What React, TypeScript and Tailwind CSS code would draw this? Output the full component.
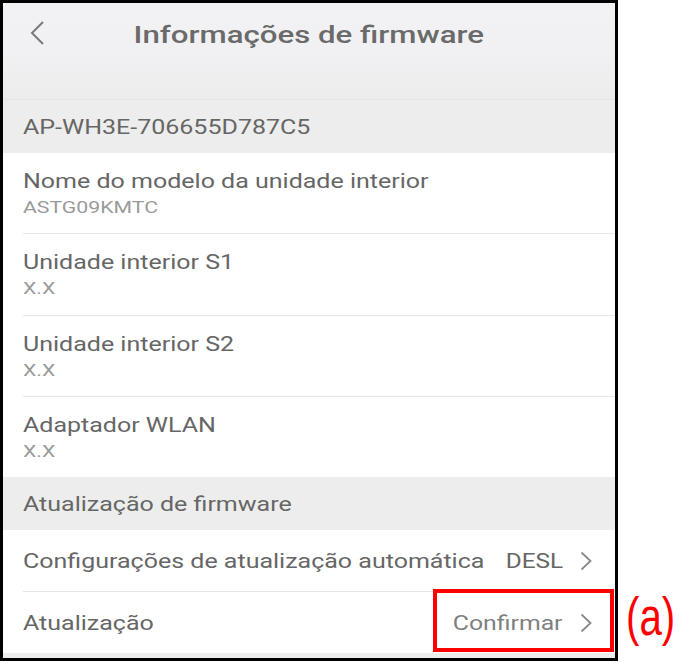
import React from "react";

const font = { fontFamily: "Roboto, 'Noto Sans', sans-serif" };

function Label({ children }: { children: React.ReactNode }) {
  return <div className="text-[20px] leading-[26px] text-[#666666] origin-left scale-x-[1.25] whitespace-nowrap">{children}</div>;
}

function Value({ children }: { children: React.ReactNode }) {
  return <div className="text-[17px] leading-[22px] text-[#9a9a9a] mt-[2px] origin-left scale-x-[1.25] whitespace-nowrap">{children}</div>;
}

function InfoRow({ label, value, h, divider = true }: { label: string; value: string; h: string; divider?: boolean }) {
  return (
    <div className={`bg-white pl-[20px] flex flex-col ${h}`}>
      <div className={`flex-1 flex flex-col pt-[15px] ${divider ? "border-b border-[#e6e6e6]" : ""}`}>
        <Label>{label}</Label>
        <Value>{value}</Value>
      </div>
    </div>
  );
}

function Chevron() {
  return (
    <svg width="14" height="20" viewBox="0 0 14 20" className="shrink-0">
      <path d="M2.5 1.5 L11.5 10 L2.5 18.5" fill="none" stroke="#8a8a8a" strokeWidth="1.8" />
    </svg>
  );
}

export default function App() {
  return (
    <div className="w-[684px] h-[663px] bg-white relative" style={font}>
      <div className="w-[618px] h-[661px] border-[3px] border-black flex flex-col overflow-hidden">
        <div className="h-[97px] shrink-0 bg-gradient-to-b from-[#f2f2f4] via-[#f1f1f3] to-[#ececed] border-b border-[#e6e6e6] relative flex items-start justify-center">
          <svg width="16" height="26" viewBox="0 0 16 26" className="absolute left-[26px] top-[17px]">
            <path d="M14 2 L3 13 L14 24" fill="none" stroke="#7a7a7a" strokeWidth="2" />
          </svg>
          <div className="text-[24px] font-medium text-[#6a6a6a] mt-[16px] leading-[32px] scale-x-[1.3] whitespace-nowrap">Informações de firmware</div>
        </div>
        <div className="h-[53px] shrink-0 bg-[#ededed] pl-[20px] flex items-center">
          <Label>AP-WH3E-706655D787C5</Label>
        </div>
        <InfoRow h="h-[81px]" label="Nome do modelo da unidade interior" value="ASTG09KMTC" />
        <InfoRow h="h-[82px]" label="Unidade interior S1" value="X.X" />
        <InfoRow h="h-[81px]" label="Unidade interior S2" value="X.X" />
        <InfoRow h="h-[80px]" label="Adaptador WLAN" value="X.X" divider={false} />
        <div className="h-[53px] shrink-0 bg-[#ededed] pl-[20px] flex items-center">
          <Label>Atualização de firmware</Label>
        </div>
        <div className="bg-white pl-[20px] h-[62px] shrink-0 flex flex-col">
          <div className="flex-1 flex items-center border-b border-[#e6e6e6] pr-[22px]">
            <div className="flex-1">
              <Label>Configurações de atualização automática</Label>
            </div>
            <div className="text-[20px] text-[#666666] mr-[16px] origin-right scale-x-[1.22]">DESL</div>
            <Chevron />
          </div>
        </div>
        <div className="bg-white pl-[20px] h-[61px] shrink-0 flex items-center pr-[22px]">
          <div className="flex-1">
            <Label>Atualização</Label>
          </div>
          <div className="text-[20px] text-[#808080] mr-[16px] origin-right scale-x-[1.24]">Confirmar</div>
          <Chevron />
        </div>
        <div className="flex-1 bg-[#ededed]" />
      </div>
      <div className="absolute left-[433px] top-[589px] w-[181px] h-[63px] border-[4px] border-[#ff0000]" />
      <div
        className="absolute left-[626px] top-[585px] text-[53px] leading-[64px] text-[#ff0000] origin-left scale-x-[0.76]"
        style={{ fontFamily: "'Liberation Sans', Arial, sans-serif" }}
      >
        (a)
      </div>
    </div>
  );
}
